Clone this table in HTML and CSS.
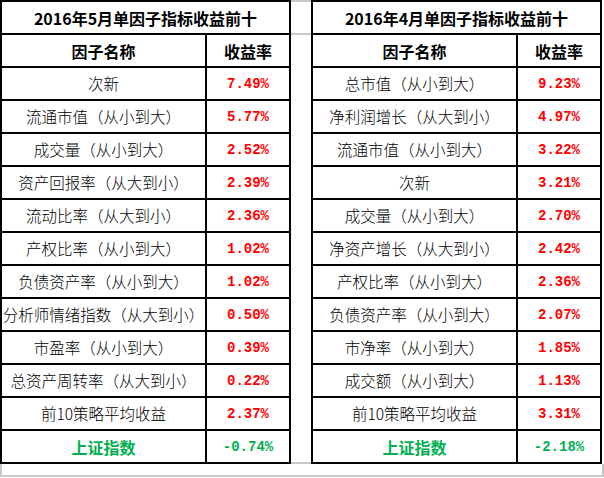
FILE: index.html
```html
<!DOCTYPE html>
<html lang="zh-CN">
<head>
<meta charset="utf-8">
<title>单因子指标收益前十</title>
<link rel="stylesheet" href="styles.css">
</head>
<body>
<div class="sheet">
  <div class="tables">
    <div class="tbl">
      <div class="cell title">2016年5月单因子指标收益前十</div>
      <div class="cell head">因子名称</div><div class="cell head">收益率</div>
      <div class="cell name">次新</div><div class="cell val">7.49%</div>
      <div class="cell name">流通市值（从小到大）</div><div class="cell val">5.77%</div>
      <div class="cell name">成交量（从小到大）</div><div class="cell val">2.52%</div>
      <div class="cell name">资产回报率（从大到小）</div><div class="cell val">2.39%</div>
      <div class="cell name">流动比率（从大到小）</div><div class="cell val">2.36%</div>
      <div class="cell name">产权比率（从小到大）</div><div class="cell val">1.02%</div>
      <div class="cell name">负债资产率（从小到大）</div><div class="cell val">1.02%</div>
      <div class="cell name">分析师情绪指数（从大到小）</div><div class="cell val">0.50%</div>
      <div class="cell name">市盈率（从小到大）</div><div class="cell val">0.39%</div>
      <div class="cell name">总资产周转率（从大到小）</div><div class="cell val">0.22%</div>
      <div class="cell name">前10策略平均收益</div><div class="cell val">2.37%</div>
      <div class="cell name green">上证指数</div><div class="cell val greenval">-0.74%</div>
    </div>
    <div class="gap"><div class="gap-top"></div></div>
    <div class="tbl">
      <div class="cell title">2016年4月单因子指标收益前十</div>
      <div class="cell head">因子名称</div><div class="cell head">收益率</div>
      <div class="cell name">总市值（从小到大）</div><div class="cell val">9.23%</div>
      <div class="cell name">净利润增长（从大到小）</div><div class="cell val">4.97%</div>
      <div class="cell name">流通市值（从小到大）</div><div class="cell val">3.22%</div>
      <div class="cell name">次新</div><div class="cell val">3.21%</div>
      <div class="cell name">成交量（从小到大）</div><div class="cell val">2.70%</div>
      <div class="cell name">净资产增长（从大到小）</div><div class="cell val">2.42%</div>
      <div class="cell name">产权比率（从小到大）</div><div class="cell val">2.36%</div>
      <div class="cell name">负债资产率（从小到大）</div><div class="cell val">2.07%</div>
      <div class="cell name">市净率（从小到大）</div><div class="cell val">1.85%</div>
      <div class="cell name">成交额（从小到大）</div><div class="cell val">1.13%</div>
      <div class="cell name">前10策略平均收益</div><div class="cell val">3.31%</div>
      <div class="cell name green">上证指数</div><div class="cell val greenval">-2.18%</div>
    </div>
  </div>
  <div class="bottom"></div>
</div>
</body>
</html>
```
FILE: styles.css
```css
html, body {
  margin: 0;
  padding: 0;
  background: #ffffff;
}
.sheet {
  width: 604px;
  height: 478px;
  overflow: hidden;
  font-family: "Noto Sans CJK SC", "Noto Sans", sans-serif;
  color: #000;
}
.tables {
  display: flex;
  align-items: stretch;
}
.tbl {
  display: grid;
  grid-template-columns: 205px 84px;
  grid-auto-rows: 33px;
  border-left: 2px solid #000;
  border-top: 2px solid #000;
  width: 291px;
  box-sizing: border-box;
}
.gap {
  width: 20px;
  border-top: 2px solid #c8c8c8;
  border-bottom: 2px solid #c8c8c8;
  box-sizing: border-box;
}
.gap-top {
  height: 31px;
  border-bottom: 2px solid #c8c8c8;
}
.cell {
  border-right: 2px solid #000;
  border-bottom: 2px solid #000;
  display: flex;
  align-items: center;
  justify-content: center;
  font-size: 15.5px;
  font-weight: 300;
  white-space: nowrap;
  line-height: 1;
}
.title {
  grid-column: 1 / span 2;
  font-weight: 700;
  font-size: 16px;
}
.head {
  font-weight: 700;
  font-size: 16px;
}
.val {
  font-family: "Liberation Mono", "DejaVu Sans Mono", monospace;
  font-weight: 700;
  font-size: 14px;
  color: #ff0000;
}
.green {
  color: #00b050;
  font-weight: 700;
  font-size: 16px;
}
.greenval {
  color: #00b050;
}
.bottom {
  height: 13px;
  border-left: 2px solid #c8c8c8;
  border-right: 2px solid #c8c8c8;
  border-bottom: 2px solid #c8c8c8;
  width: 604px;
  box-sizing: border-box;
}
```
